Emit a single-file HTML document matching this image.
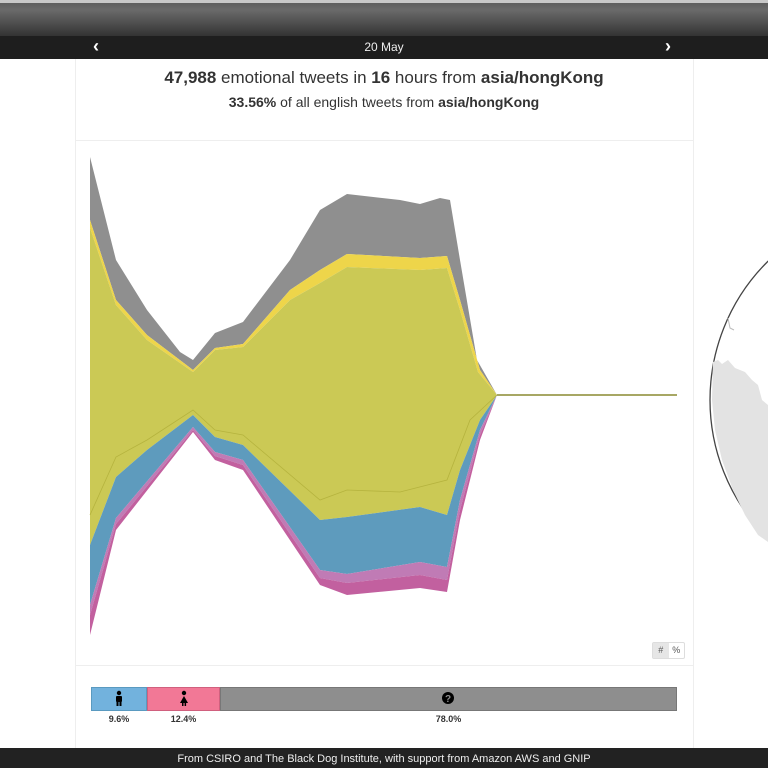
<!DOCTYPE html>
<html><head><meta charset="utf-8"><style>
*{margin:0;padding:0;box-sizing:border-box}
body{width:768px;height:768px;overflow:hidden;background:#fff;font-family:"Liberation Sans",sans-serif;position:relative}
.top{position:absolute;left:0;top:0;width:768px;height:36px;background:linear-gradient(#c8c8c8 0,#c8c8c8 3px,#5e5e5e 3px,#6a6a6a 10px,#333 36px)}
.nav{position:absolute;left:0;top:36px;width:768px;height:23px;background:#1e1e1e;color:#eee;font-size:12px;text-align:center;line-height:23px}
.nav b{position:absolute;top:-1px;font-size:18px;color:#fff}
.panel{position:absolute;left:75px;top:59px;width:619px;height:689px;border-left:1px solid #eee;border-right:1px solid #eee}
.t1{position:absolute;top:68px;left:0;width:768px;text-align:center;font-size:17px;color:#333}
.t2{position:absolute;top:94px;left:0;width:768px;text-align:center;font-size:14px;color:#333}
.hr{position:absolute;left:75px;width:619px;height:1px;background:#eee}
.tog{position:absolute;top:642px;left:652px;width:33px;height:17px;border:1px solid #ddd;border-radius:2px;font-size:9px;color:#555;display:flex}
.tog span{flex:1;text-align:center;line-height:15px}
.bar{position:absolute;top:687px;height:24px}
.lab{position:absolute;top:714px;font-size:9px;font-weight:bold;color:#333;text-align:center}
.foot{position:absolute;left:0;top:748px;width:768px;height:20px;background:#222;color:#eee;font-size:11px;text-align:center;line-height:22px}
</style></head><body>
<div class="top"></div>
<div class="nav"><b style="left:93px">&#8249;</b>20 May<b style="left:665px">&#8250;</b></div>
<svg style="position:absolute;left:0;top:0" width="768" height="768">
<circle cx="905" cy="400" r="195" fill="#fff" stroke="#444" stroke-width="1.3"/>
<path d="M713 362 L718 360 L722 364 L728 360 L735 368 L745 372 L752 380 L758 385 L762 400 L768 405 L768 542 L758 535 L745 515 L733 490 L722 460 L715 430 L712 400 Z" fill="#e3e3e3"/>
<path d="M728 318 L730 328 L734 330" fill="none" stroke="#bbb" stroke-width="1"/>
</svg>
<div class="panel"></div>
<div class="t1"><b>47,988</b> emotional tweets in <b>16</b> hours from <b>asia/hongKong</b></div>
<div class="t2"><b>33.56%</b> of all english tweets from <b>asia/hongKong</b></div>
<div class="hr" style="top:140px"></div>
<div class="hr" style="top:665px"></div>
<svg style="position:absolute;left:0;top:0" width="768" height="768">
<path d="M90 157 L116 260 L147 310 L180 352 L193 360 L215 333 L243 322 L290 260 L320 210 L347 194 L400 200 L420 204 L440 198 L450 200 L460 260 L477 360 L497 395 L480 370 L460 300 L447 256 L420 258 L347 254 L320 270 L290 290 L243 344 L215 348 L193 370 L147 335 L116 300 L90 220 Z" fill="#8f8f8f"/>
<path d="M90 220 L116 300 L147 335 L193 370 L215 348 L243 344 L290 290 L320 270 L347 254 L420 258 L447 256 L460 300 L480 370 L497 395 L478 372 L460 310 L447 268 L420 270 L347 267 L320 283 L290 300 L243 347 L215 350 L193 372 L147 340 L116 305 L90 228 Z" fill="#eed54a"/>
<path d="M90 228 L116 305 L147 340 L193 372 L215 350 L243 347 L290 300 L320 283 L347 267 L420 270 L447 268 L460 310 L478 372 L497 395 L480 420 L460 470 L447 515 L420 507 L347 517 L320 520 L243 445 L215 437 L193 415 L147 450 L116 477 L90 545 Z" fill="#cbc955"/>
<path d="M90 515 L116 457 L147 440 L193 410 L215 430 L243 435 L320 500 L347 490 L400 492 L447 480 L470 420 L497 395" fill="none" stroke="#b5b33e" stroke-width="0.8"/>
<path d="M90 545 L116 477 L147 450 L193 415 L215 437 L243 445 L320 520 L347 517 L420 507 L447 515 L460 470 L480 420 L497 395 L480 430 L460 500 L447 567 L420 562 L347 574 L320 570 L243 460 L215 452 L193 427 L116 518 L90 605 Z" fill="#5e9bbd"/>
<path d="M90 605 L116 518 L193 427 L215 452 L243 460 L320 570 L347 574 L420 562 L447 567 L460 500 L480 430 L497 395 L480 435 L460 510 L447 580 L420 575 L347 583 L320 578 L243 465 L215 456 L193 430 L116 524 L90 615 Z" fill="#c07bb5"/>
<path d="M90 615 L116 524 L193 430 L215 456 L243 465 L320 578 L347 583 L420 575 L447 580 L460 510 L480 435 L497 395 L480 440 L460 520 L447 592 L420 588 L347 595 L320 585 L243 470 L215 460 L193 432 L116 530 L90 635 Z" fill="#c2609f"/>
<line x1="497" y1="395" x2="677" y2="395" stroke="#8a8a30" stroke-width="1.5"/>
</svg>
<div class="tog"><span style="background:#e6e6e6">#</span><span>%</span></div>
<div class="bar" style="left:91px;width:56px;background:#72b2dd;border:1px solid #5a9ac0"></div>
<div class="bar" style="left:147px;width:73px;background:#f27896;border:1px solid #d0607e"></div>
<div class="bar" style="left:220px;width:457px;background:#8e8e8e;border:1px solid #777"></div>
<svg style="position:absolute;left:0;top:0" width="768" height="768">
<circle cx="119" cy="693" r="2.2"/><rect x="116" y="696" width="6" height="6" rx="1"/><rect x="116.5" y="701" width="2" height="5"/><rect x="119.5" y="701" width="2" height="5"/>
<circle cx="184" cy="693" r="2.2"/><path d="M184 696 L188 703 L180 703 Z"/><rect x="182" y="703" width="1.5" height="3"/><rect x="184.6" y="703" width="1.5" height="3"/>
<circle cx="448" cy="698" r="6"/><text x="448" y="702" font-size="10" font-weight="bold" fill="#8e8e8e" text-anchor="middle" font-family="Liberation Sans">?</text>
</svg>
<div class="lab" style="left:91px;width:56px">9.6%</div>
<div class="lab" style="left:147px;width:73px">12.4%</div>
<div class="lab" style="left:220px;width:457px">78.0%</div>
<div class="foot">From CSIRO and The Black Dog Institute, with support from Amazon AWS and GNIP</div>
</body></html>
